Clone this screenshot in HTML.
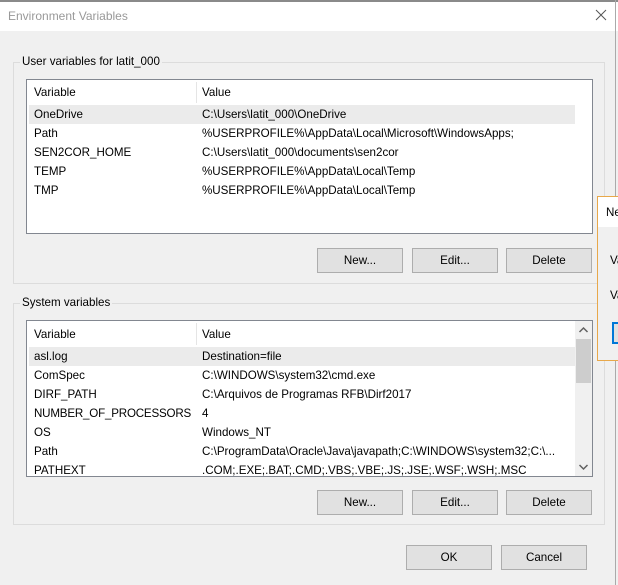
<!DOCTYPE html><html><head><style>
*{margin:0;padding:0;box-sizing:border-box}
body{width:618px;height:585px;background:#f0f0f0;font-family:"Liberation Sans",sans-serif;font-size:11.6px;color:#000;position:relative;overflow:hidden}
.a{position:absolute}
.title{left:0;top:0;width:618px;height:31px;background:#fff}
.grp{border:1px solid #dcdcdc}
.lbl{background:#f0f0f0;padding:0 2px;line-height:14px}
.list{background:#fff;border:1px solid #828790;overflow:hidden}
.row{position:absolute;left:2px;height:19px;line-height:19px;width:546px}
.row span{position:absolute}
.btn{background:#e1e1e1;border:1px solid #adadad;text-align:center;line-height:23px}
</style></head><body>
<div class="a title"></div>
<div class="a" style="left:0;top:0;width:618px;height:2px;background:#8a8a8a"></div>
<div class="a" style="left:8px;top:9px;color:#999;font-size:12px">Environment Variables</div>
<svg class="a" style="left:595px;top:9px" width="12" height="12"><path d="M1 1L11 11M11 1L1 11" stroke="#555" stroke-width="1"/></svg>

<div class="a grp" style="left:13px;top:62px;width:592px;height:222px"></div>
<div class="a lbl" style="left:20px;top:55px">User variables for latit_000</div>
<div class="a list" style="left:26px;top:79px;width:567px;height:155px">
 <div class="row" style="top:2px;height:21px;line-height:21px"><span style="left:5px">Variable</span><span style="left:173px">Value</span><div class="a" style="left:167px;top:0;width:1px;height:21px;background:#e5e5e5"></div></div>
 <div class="row" style="top:25px;background:#ebebeb"><span style="left:5px">OneDrive</span><span style="left:173px">C:\Users\latit_000\OneDrive</span></div>
 <div class="row" style="top:44px"><span style="left:5px">Path</span><span style="left:173px">%USERPROFILE%\AppData\Local\Microsoft\WindowsApps;</span></div>
 <div class="row" style="top:63px"><span style="left:5px">SEN2COR_HOME</span><span style="left:173px">C:\Users\latit_000\documents\sen2cor</span></div>
 <div class="row" style="top:82px"><span style="left:5px">TEMP</span><span style="left:173px">%USERPROFILE%\AppData\Local\Temp</span></div>
 <div class="row" style="top:101px"><span style="left:5px">TMP</span><span style="left:173px">%USERPROFILE%\AppData\Local\Temp</span></div>
</div>
<div class="a btn" style="left:317px;top:248px;width:86px;height:25px">New...</div>
<div class="a btn" style="left:412px;top:248px;width:86px;height:25px">Edit...</div>
<div class="a btn" style="left:506px;top:248px;width:86px;height:25px">Delete</div>

<div class="a grp" style="left:13px;top:303px;width:592px;height:222px"></div>
<div class="a lbl" style="left:20px;top:296px">System variables</div>
<div class="a list" style="left:26px;top:320px;width:567px;height:157px">
 <div class="row" style="top:2px;height:22px;line-height:23px"><span style="left:5px">Variable</span><span style="left:173px">Value</span><div class="a" style="left:167px;top:0;width:1px;height:22px;background:#e5e5e5"></div></div>
 <div class="row" style="top:26px;background:#ebebeb"><span style="left:5px">asl.log</span><span style="left:173px">Destination=file</span></div>
 <div class="row" style="top:45px"><span style="left:5px">ComSpec</span><span style="left:173px">C:\WINDOWS\system32\cmd.exe</span></div>
 <div class="row" style="top:64px"><span style="left:5px">DIRF_PATH</span><span style="left:173px">C:\Arquivos de Programas RFB\Dirf2017</span></div>
 <div class="row" style="top:83px"><span style="left:5px;letter-spacing:-0.2px">NUMBER_OF_PROCESSORS</span><span style="left:173px">4</span></div>
 <div class="row" style="top:102px"><span style="left:5px">OS</span><span style="left:173px">Windows_NT</span></div>
 <div class="row" style="top:121px"><span style="left:5px">Path</span><span style="left:173px">C:\ProgramData\Oracle\Java\javapath;C:\WINDOWS\system32;C:\...</span></div>
 <div class="row" style="top:140px"><span style="left:5px">PATHEXT</span><span style="left:173px">.COM;.EXE;.BAT;.CMD;.VBS;.VBE;.JS;.JSE;.WSF;.WSH;.MSC</span></div>
 <div class="a" style="left:548px;top:0;width:17px;height:155px;background:#f0f0f0"></div>
 <div class="a" style="left:549px;top:18px;width:15px;height:44px;background:#cdcdcd"></div>
 <svg class="a" style="left:551px;top:5px" width="11" height="8"><path d="M1.5 6L5.5 2L9.5 6" fill="none" stroke="#606060" stroke-width="1.5"/></svg>
 <svg class="a" style="left:551px;top:142px" width="11" height="8"><path d="M1.5 2L5.5 6L9.5 2" fill="none" stroke="#606060" stroke-width="1.5"/></svg>
</div>
<div class="a btn" style="left:317px;top:490px;width:86px;height:25px">New...</div>
<div class="a btn" style="left:412px;top:490px;width:86px;height:25px">Edit...</div>
<div class="a btn" style="left:506px;top:490px;width:86px;height:25px">Delete</div>

<div class="a btn" style="left:406px;top:545px;width:86px;height:25px">OK</div>
<div class="a btn" style="left:501px;top:545px;width:86px;height:25px">Cancel</div>
<div class="a" style="left:615px;top:0;width:1px;height:585px;background:#aaa"></div>

<div class="a" style="left:597px;top:196px;width:30px;height:165px;background:#f0f0f0;border:1px solid #e8a84a">
 <div class="a" style="left:0;top:0;width:30px;height:30px;background:#fff"></div>
 <div class="a" style="left:8px;top:9px">Ne</div>
 <div class="a" style="left:12px;top:57px">Va</div>
 <div class="a" style="left:12px;top:92px">Va</div>
 <div class="a" style="left:14px;top:125px;width:20px;height:22px;border:2px solid #0078d7;background:#e1e1e1"></div>
</div>
</body></html>
